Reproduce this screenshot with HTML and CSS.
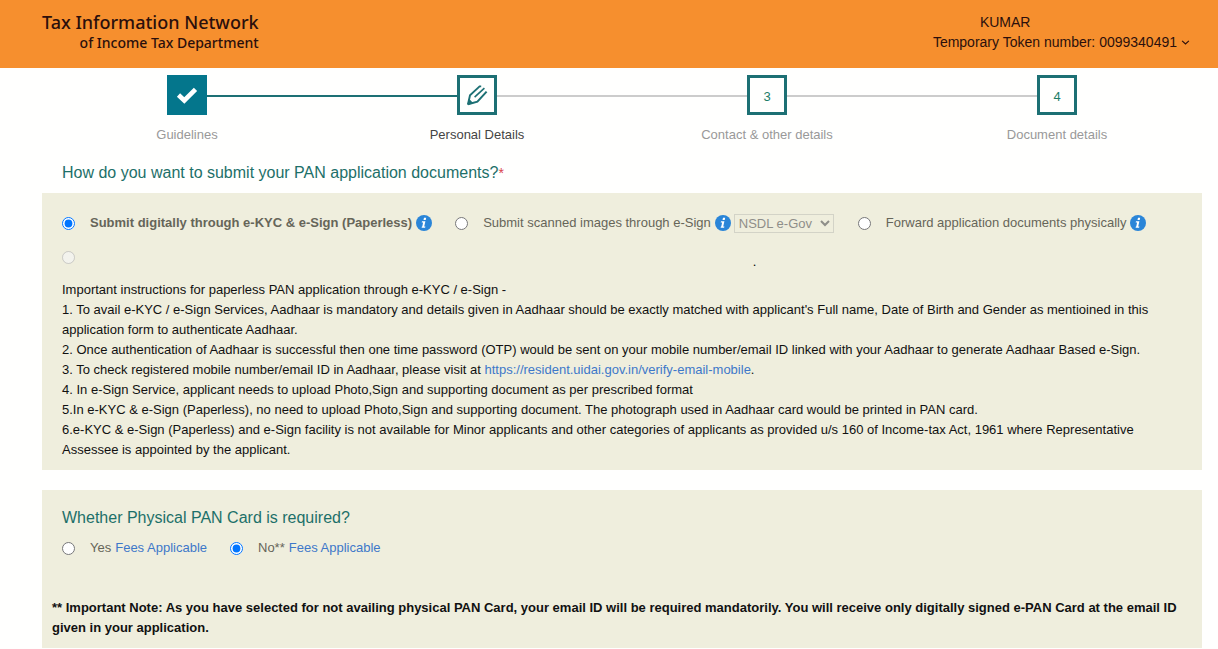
FILE: index.html
```html
<!DOCTYPE html>
<html lang="en">
<head>
<meta charset="utf-8">
<title>Tax Information Network</title>
<link rel="stylesheet" href="styles.css">
</head>
<body>
<header class="header">
  <div class="brand">
    <div class="brand-name">Tax Information Network</div>
    <div class="brand-dept">of Income Tax Department</div>
  </div>
  <div class="user">
    <div class="user-name">KUMAR</div>
    <button class="token" type="button">Temporary Token number: 0099340491
      <svg class="chevron" viewBox="0 0 8 6" aria-hidden="true"><path d="M1 1.5 4 4.3 7 1.5" fill="none" stroke="currentColor" stroke-width="1"/></svg>
    </button>
  </div>
</header>
<main class="main">
  <ol class="steps">
    <li class="step step-done">
      <span class="step-box"><svg class="icon-check" viewBox="0 0 22 18" aria-hidden="true"><path d="M2.5 9 8.3 14.5 19.5 3.3" fill="none" stroke="#fff" stroke-width="4.6"/></svg></span>
      <span class="step-label">Guidelines</span>
    </li>
    <li class="step step-current">
      <span class="step-box"><svg class="icon-pencil" viewBox="0 0 22 22" aria-hidden="true"><g fill="none" stroke="#1d7074"><path d="M15.2 2.4H13.6L4 11.2 2 20.2" stroke-width="1.9"/><path d="M18.4 4.2 8.6 13.2" stroke-width="1.6"/><path d="M20.6 7.6 11.4 17.6 2 20.2" stroke-width="2"/></g><path d="M1.2 21 3 14.8 7.4 19.2Z" fill="#1d7074"/></svg></span>
      <span class="step-label">Personal Details</span>
    </li>
    <li class="step">
      <span class="step-box">3</span>
      <span class="step-label">Contact &amp; other details</span>
    </li>
    <li class="step">
      <span class="step-box">4</span>
      <span class="step-label">Document details</span>
    </li>
  </ol>

  <h2 class="question" id="submit-question">How do you want to submit your PAN application documents?<span class="required">*</span></h2>
  <section class="panel" aria-labelledby="submit-question">
    <div class="options">
      <div class="option option-digital">
        <input class="radio" type="radio" name="mode" id="mode-digital" checked>
        <label class="option-label selected" for="mode-digital">Submit digitally through e-KYC &amp; e-Sign (Paperless)</label>
        <svg class="info" viewBox="0 0 16 16" aria-hidden="true"><circle cx="8" cy="8" r="8" fill="#2a85d8"/><path d="M8 2.8h2.2l-.5 2.1H7.5zM6 6.2h3.4L8.2 11.4h1.2l-.3 1.4H5.6l.3-1.4h.4l.8-3.8H5.7z" fill="#fff"/></svg>
      </div>
      <div class="option option-scanned">
        <input class="radio" type="radio" name="mode" id="mode-scanned">
        <label class="option-label" for="mode-scanned">Submit scanned images through e-Sign</label>
        <svg class="info" viewBox="0 0 16 16" aria-hidden="true"><circle cx="8" cy="8" r="8" fill="#2a85d8"/><path d="M8 2.8h2.2l-.5 2.1H7.5zM6 6.2h3.4L8.2 11.4h1.2l-.3 1.4H5.6l.3-1.4h.4l.8-3.8H5.7z" fill="#fff"/></svg>
        <select class="provider" aria-label="e-Sign provider" disabled><option>NSDL e-Gov</option></select>
      </div>
      <div class="option">
        <input class="radio" type="radio" name="mode" id="mode-physical">
        <label class="option-label" for="mode-physical">Forward application documents physically</label>
        <svg class="info" viewBox="0 0 16 16" aria-hidden="true"><circle cx="8" cy="8" r="8" fill="#2a85d8"/><path d="M8 2.8h2.2l-.5 2.1H7.5zM6 6.2h3.4L8.2 11.4h1.2l-.3 1.4H5.6l.3-1.4h.4l.8-3.8H5.7z" fill="#fff"/></svg>
      </div>
    </div>
    <div class="extra">
      <input class="radio" type="radio" name="mode" aria-label="Unavailable option" disabled>
      <span class="dot">.</span>
    </div>
    <div class="instructions">
      <p>Important instructions for paperless PAN application through e-KYC / e-Sign -</p>
      <p>1. To avail e-KYC / e-Sign Services, Aadhaar is mandatory and details given in Aadhaar should be exactly matched with applicant's Full name, Date of Birth and Gender as mentioined in this application form to authenticate Aadhaar.</p>
      <p>2. Once authentication of Aadhaar is successful then one time password (OTP) would be sent on your mobile number/email ID linked with your Aadhaar to generate Aadhaar Based e-Sign.</p>
      <p>3. To check registered mobile number/email ID in Aadhaar, please visit at <a class="link" href="https://resident.uidai.gov.in/verify-email-mobile">https://resident.uidai.gov.in/verify-email-mobile</a>.</p>
      <p>4. In e-Sign Service, applicant needs to upload Photo,Sign and supporting document as per prescribed format</p>
      <p>5.In e-KYC &amp; e-Sign (Paperless), no need to upload Photo,Sign and supporting document. The photograph used in Aadhaar card would be printed in PAN card.</p>
      <p>6.e-KYC &amp; e-Sign (Paperless) and e-Sign facility is not available for Minor applicants and other categories of applicants as provided u/s 160 of Income-tax Act, 1961 where Representative Assessee is appointed by the applicant.</p>
    </div>
  </section>

  <section class="panel panel-card" aria-labelledby="card-question">
    <h2 class="card-question" id="card-question">Whether Physical PAN Card is required?</h2>
    <div class="card-options">
      <div class="option">
        <input class="radio" type="radio" name="card" id="card-yes">
        <label class="option-label" for="card-yes">Yes</label>
        <a class="link" href="#fees">Fees Applicable</a>
      </div>
      <div class="option">
        <input class="radio" type="radio" name="card" id="card-no" checked>
        <label class="option-label" for="card-no">No**</label>
        <a class="link" href="#fees">Fees Applicable</a>
      </div>
    </div>
    <p class="note">** Important Note: As you have selected for not availing physical PAN Card, your email ID will be required mandatorily. You will receive only digitally signed e-PAN Card at the email ID given in your application.</p>
  </section>
</main>
</body>
</html>
```

FILE: styles.css
```css
* { box-sizing: border-box; }
body {
  margin: 0;
  background: #fffffe;
  color: #111;
  font: 13px/20px "Liberation Sans", Arial, sans-serif;
}
h2, p, ol { margin: 0; padding: 0; }
.header {
  display: flex;
  justify-content: space-between;
  align-items: flex-start;
  height: 68px;
  padding: 12px 28px 0 42px;
  background: #f68f2e;
  color: #2b0f0c;
}
.brand {
  font-family: "Noto Sans", "Open Sans", sans-serif;
  font-weight: 500;
  text-align: right;
}
.brand-name { font-size: 18px; line-height: 21px; }
.brand-dept { font-size: 14px; line-height: 20px; }
.user { font-size: 14px; }
.user-name { padding-left: 47px; }
.token {
  display: flex;
  align-items: center;
  gap: 4px;
  padding: 0;
  border: 0;
  background: none;
  color: inherit;
  font: inherit;
}
.chevron { width: 9px; height: 7px; }
.main { padding: 7px 16px 0 42px; }
.steps { display: grid; grid-template-columns: repeat(4, 1fr); list-style: none; }
.step {
  position: relative;
  display: flex;
  flex-direction: column;
  align-items: center;
  gap: 10px;
  color: #999;
}
.step:not(:last-child)::after {
  content: "";
  position: absolute;
  top: 20px;
  left: calc(50% + 20px);
  width: calc(100% - 40px);
  height: 2px;
  background: #ccc;
}
.step-box {
  display: grid;
  place-items: center;
  width: 40px;
  height: 40px;
  padding-top: 4px;
  border: 3px solid #1d7074;
  color: #1d7d68;
  font-size: 13px;
}
.step-done .step-box { background: #04768c; border-color: #04768c; }
.step-done:not(:last-child)::after { background: #1d7074; }
.step-current .step-box, .step-done .step-box { padding-top: 0; }
.step-current { color: #444; }
.icon-check { width: 22px; height: 18px; }
.icon-pencil { width: 22px; height: 22px; }
.question, .card-question {
  color: #1d7069;
  font-size: 16px;
  font-weight: 400;
  line-height: 24px;
}
.question { padding: 16px 20px 8px; }
.required { color: #d9434e; font-size: 14px; }
.panel { padding: 20px 20px 10px; background: #efeedd; }
.options, .card-options { display: flex; flex-wrap: wrap; }
.option { display: flex; align-items: center; height: 20px; color: #666559; }
.option-label { margin: 0 4px 0 15px; }
.selected { font-weight: 700; }
.radio { flex: none; width: 13px; height: 13px; margin: 0; }
.info { width: 16px; height: 16px; }
.option-digital { margin-right: 23px; }
.option-scanned { margin-right: 24px; }
.provider {
  width: 100px;
  height: 19px;
  margin-left: 3px;
  padding: 0;
  border: 1px solid #c8c8be;
  background: #efeedd;
  color: #666;
  font: 13px "Liberation Sans", Arial, sans-serif;
}
.extra { display: flex; align-items: center; height: 20px; margin: 14px 0 13px; }
.dot { margin: 10px 0 0 auto; padding-right: 38%; color: #000; }
.dot { padding-right: 38%; }
.link { color: #3e78c9; text-decoration: none; }
.panel-card { margin-top: 20px; padding: 16px 20px 10px; }
.card-options { gap: 23px; padding-top: 8px; }
.note { margin: 40px -10px 0; font-weight: 700; }
```
